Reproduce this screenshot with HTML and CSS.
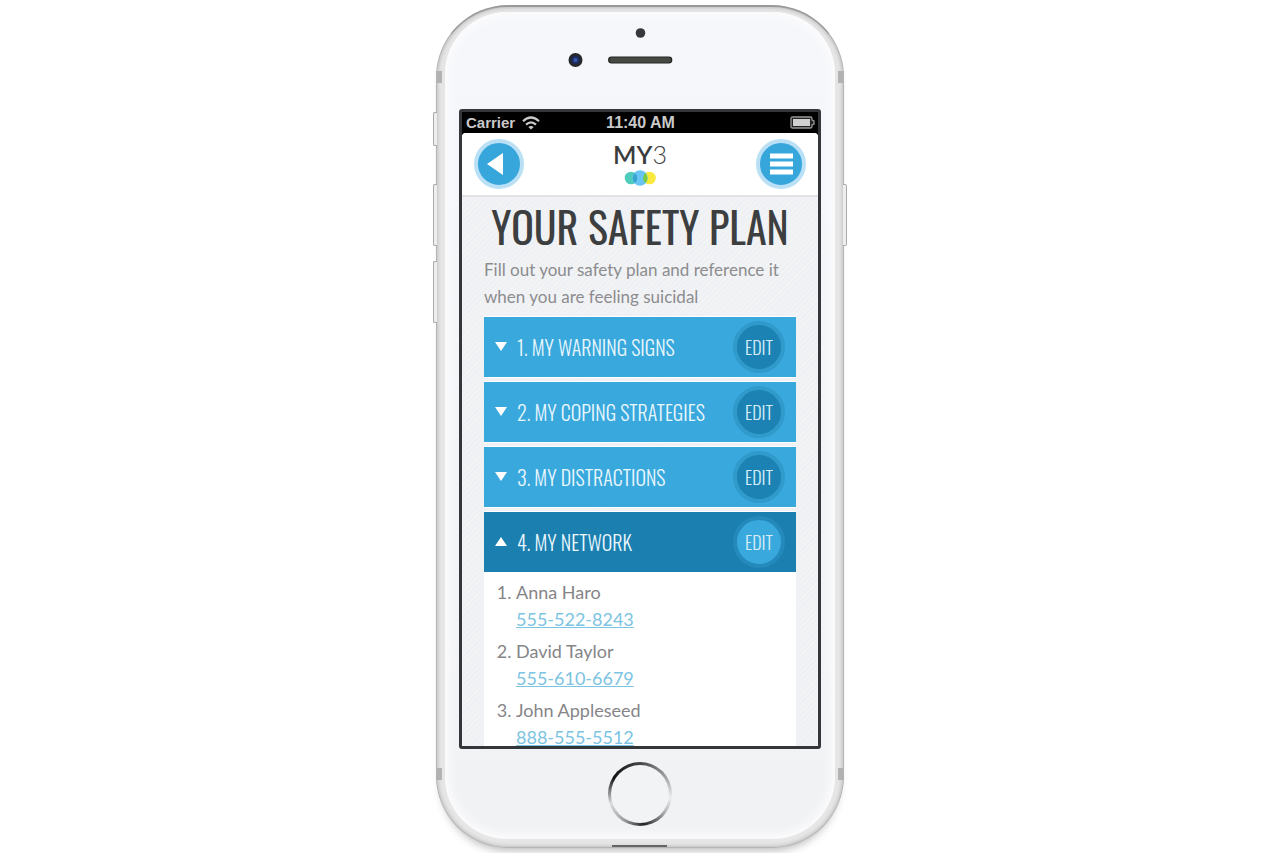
FILE: index.html
```
<!DOCTYPE html>
<html lang="en">
<head>
  <meta charset="UTF-8" />
  <meta name="viewport" content="width=device-width, initial-scale=1.0" />
  <title>MY3 - Your Safety Plan</title>
  <link rel="stylesheet" href="styles.css">
</head>
<body>
  <div class="phone">
    <span class="side mute"></span>
    <span class="side vol-up"></span>
    <span class="side vol-down"></span>
    <span class="side power"></span>
    <span class="band band-top"></span>
    <span class="band band-bottom"></span>
    <span class="port"></span>
    <div class="face">
      <div class="top">
        <svg width="150" height="46" viewBox="0 0 150 46" aria-hidden="true">
          <circle cx="75.500" cy="8" r="4.800" fill="#36383c"/>
          <circle cx="10.500" cy="35" r="7" fill="#24272c"/>
          <circle cx="10.500" cy="35" r="4" fill="#1c2c62"/>
          <circle cx="10.500" cy="35" r="2" fill="#3959ad"/>
          <rect x="43.700" y="32.200" width="63" height="5.600" rx="2.800" fill="#464842" stroke="#252724" stroke-width="1.300"/>
        </svg>
      </div>

      <div class="screen">
        <div class="status">
          <span class="carrier">Carrier
            <svg width="18" height="14" viewBox="0 0 18 14" fill="none" stroke="#c9c9c9" stroke-width="2.200" aria-hidden="true">
              <path d="M1 5.200Q9-2.200 17 5.200M4 8.600Q9 4 14 8.600"/>
              <path d="M9 13.600L6.300 11Q9 8.800 11.700 11Z" fill="#c9c9c9" stroke="none"/>
            </svg>
          </span>
          <span class="time">11:40 AM</span>
          <span class="battery">
            <svg width="25" height="13" viewBox="0 0 25 13" aria-hidden="true">
              <path d="M2.500 1H20.500Q22 1 22 2.500V4L24 5V8L22 9V10.500Q22 12 20.500 12H2.500Q1 12 1 10.500V2.500Q1 1 2.500 1Z" fill="#222" stroke="#999" stroke-width="1.300"/>
              <rect x="3" y="3" width="17" height="7" fill="#d0d0d0"/>
            </svg>
          </span>
        </div>

        <div class="app">
          <header>
            <button class="round" aria-label="Back">
              <svg width="42" height="42" viewBox="0 0 42 42"><path d="M9 21L25 10V32Z" fill="#fff"/></svg>
            </button>
            <div class="logo">
              <div class="name"><b>MY</b>3</div>
              <svg width="32" height="16" viewBox="0 0 32 16" aria-hidden="true">
                <circle cx="7" cy="8" r="6.300" fill="#4ecbbb"/>
                <circle cx="25.500" cy="8" r="6.300" fill="#f8e93c"/>
                <circle cx="16" cy="8" r="7.700" fill="#67c4f4"/>
                <path d="M10.700 2.900A7.700 7.700 0 0 0 10.700 13.100A6.300 6.300 0 0 0 10.700 2.900Z" fill="#35a5cf"/>
                <path d="M21.500 3A7.700 7.700 0 0 1 21.500 13A6.300 6.300 0 0 1 21.500 3Z" fill="#78cb41"/>
              </svg>
            </div>
            <button class="round" aria-label="Menu">
              <svg width="42" height="42" viewBox="0 0 42 42"><path d="M10 10.500h23v5H10zM10 18.500h23v5H10zM10 26.500h23v5H10z" fill="#fff"/></svg>
            </button>
          </header>

          <main>
            <h1>YOUR SAFETY PLAN</h1>
            <p>Fill out your safety plan and reference it when you are feeling suicidal</p>

            <div class="plan">
              <section class="row">
                <svg width="14" height="10" viewBox="0 0 14 10" aria-hidden="true"><path d="M1 0H13L7 9Z"/></svg>
                <h2>1. MY WARNING SIGNS</h2>
                <button class="edit">EDIT</button>
              </section>
              <section class="row">
                <svg width="14" height="10" viewBox="0 0 14 10" aria-hidden="true"><path d="M1 0H13L7 9Z"/></svg>
                <h2>2. MY COPING STRATEGIES</h2>
                <button class="edit">EDIT</button>
              </section>
              <section class="row">
                <svg width="14" height="10" viewBox="0 0 14 10" aria-hidden="true"><path d="M1 0H13L7 9Z"/></svg>
                <h2>3. MY DISTRACTIONS</h2>
                <button class="edit">EDIT</button>
              </section>
              <section class="row open">
                <svg width="14" height="10" viewBox="0 0 14 10" aria-hidden="true"><path d="M1 9H13L7 0Z"/></svg>
                <h2>4. MY NETWORK</h2>
                <button class="edit">EDIT</button>
              </section>
            </div>

            <ol class="contacts">
              <li>Anna Haro<a href="tel:555-522-8243">555-522-8243</a></li>
              <li>David Taylor<a href="tel:555-610-6679">555-610-6679</a></li>
              <li>John Appleseed<a href="tel:888-555-5512">888-555-5512</a></li>
            </ol>
          </main>
        </div>
      </div>

      <div class="bottom">
        <button class="home" aria-label="Home"></button>
      </div>
    </div>
  </div>
</body>
</html>
```

FILE: styles.css
```
* {
  box-sizing: border-box;
  margin: 0;
  padding: 0;
}
body {
  background: #fff;
  font-family: Lato, sans-serif;
  height: 100vh;
  padding-top: 5px;
  overflow: hidden;
}
button {
  border: none;
  cursor: pointer;
}
svg {
  display: block;
  flex: none;
}

/* phone shell */
.phone {
  position: relative;
  max-width: 408px;
  height: calc(100vh - 10px);
  margin: 0 auto;
  padding: 5px 8px 8px;
  border-radius: 72px;
  background: #e6e6e7;
  border: 1px solid #b4b4b4;
  border-top: 2px solid #999;
  box-shadow: inset 0 0 4px #aaa, 0 8px 10px -6px rgba(0, 0, 0, 0.3);
}
.face {
  display: flex;
  flex-direction: column;
  height: 100%;
  padding: 0 14px;
  border-radius: 62px;
  background: linear-gradient(#f6f7fb, #f1f2f4);
  box-shadow: inset 0 0 10px 4px #fcfcfd;
}
.side {
  position: absolute;
  left: -4px;
  width: 4px;
  border: 1px solid #aaa;
  border-right: none;
  border-radius: 2px 0 0 2px;
  background: #eee;
}
.mute {
  top: 105px;
  height: 34px;
}
.vol-up {
  top: 177px;
  height: 62px;
}
.vol-down {
  top: 254px;
  height: 62px;
}
.power {
  top: 177px;
  left: auto;
  right: -4px;
  height: 62px;
  border: 1px solid #aaa;
  border-left: none;
  border-radius: 0 2px 2px 0;
}
.band {
  position: absolute;
  left: -1px;
  right: -1px;
  height: 12px;
  border: solid #b2b2b2;
  border-width: 0 6px;
}
.band-top {
  top: 64px;
}
.band-bottom {
  bottom: 67px;
}
.port {
  position: absolute;
  bottom: 0;
  left: 50%;
  width: 55px;
  height: 2px;
  margin-left: -28px;
  background: #666;
}

.top {
  display: flex;
  justify-content: center;
  height: 97px;
  padding-top: 13px;
}
.bottom {
  display: flex;
  justify-content: center;
  align-items: center;
  height: 90px;
}
.home {
  width: 64px;
  height: 64px;
  border: 3px solid transparent;
  border-radius: 50%;
  background: linear-gradient(#f2f3f5, #f2f3f5) padding-box,
    conic-gradient(#444, #aaa 17%, #eee 27%, #bbb 34%, #222 48%, #999 58%, #ddd 70%, #777 77%, #111 84%, #444) border-box;
}

/* screen */
.screen {
  flex: 1;
  min-height: 0;
  overflow: hidden;
  border: 3px solid #34373a;
  border-radius: 3px;
  background: #000;
}
.status {
  display: grid;
  grid-template-columns: 1fr auto 1fr;
  align-items: center;
  height: 21px;
  padding: 0 3px 0 4px;
  color: #c9c9c9;
  font: bold 15px "Liberation Sans", Arial, sans-serif;
}
.time {
  font-size: 16px;
}
.carrier {
  display: flex;
  align-items: center;
  gap: 7px;
}
.battery {
  justify-self: end;
}
.app {
  border-radius: 4px 4px 0 0;
  overflow: hidden;
  background: repeating-linear-gradient(135deg, #f2f3f5 0 2px, #eff0f3 2px 4px);
}
header {
  display: flex;
  justify-content: space-between;
  align-items: center;
  height: 64px;
  padding: 0 12px;
  background: #fff;
  border-bottom: 2px solid #e2e2e4;
}
.round {
  border: 4px solid #b9e0f5;
  border-radius: 50%;
  background: #37a6db;
}
.logo {
  display: flex;
  flex-direction: column;
  align-items: center;
  padding-bottom: 4px;
  color: #3c3c3e;
}
.name {
  font-size: 25px;
  font-weight: 300;
  line-height: 32px;
}
.name b {
  font-weight: 600;
}

main {
  padding: 2px 22px 0;
}
h1 {
  color: #3d3e40;
  font-family: Oswald, sans-serif;
  font-size: 42px;
  font-weight: 400;
  line-height: 54px;
  text-align: center;
  white-space: nowrap;
}
p {
  margin-top: 3px;
  color: #8c8c8f;
  font-size: 17px;
  line-height: 27px;
}
.plan {
  display: grid;
  gap: 3px;
  margin-top: 6px;
}
.row {
  display: flex;
  align-items: center;
  height: 62px;
  padding: 0 11px 0 10px;
  background: #39a8dc;
  border: 1px solid #fff;
  border-width: 1px 0;
}
.row path {
  fill: #fff;
}
.row h2 {
  flex: 1;
  margin-left: 9px;
  color: #eaf7fd;
  font-family: Oswald, sans-serif;
  font-size: 20px;
  font-weight: 300;
  white-space: nowrap;
}
.edit {
  width: 52px;
  height: 52px;
  border: 4px solid #2f9acb;
  border-radius: 50%;
  background: #1b82b3;
  color: #d4edf8;
  font-family: Oswald, sans-serif;
  font-size: 18px;
  font-weight: 300;
}
.open {
  background: #1b7fb0;
}
.open .edit {
  border-color: #2489bb;
  background: #39a8dc;
}
.contacts {
  padding: 6px 10px 20px 32px;
  background: #fff;
  color: #858588;
  font-size: 18px;
  line-height: 27px;
}
.contacts li {
  margin-bottom: 5px;
}
.contacts a {
  display: block;
  color: #7cc4e2;
}
```
